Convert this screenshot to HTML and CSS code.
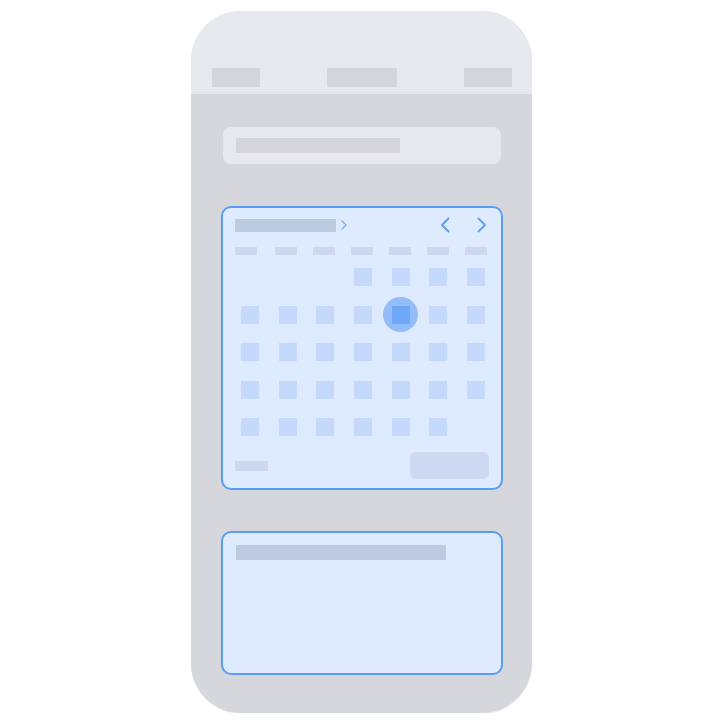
FILE: index.html
```html
<!DOCTYPE html>
<html>
<head>
<meta charset="utf-8">
<link rel="stylesheet" href="styles.css">
</head>
<body>
<div class="phone">
  <div class="header">
    <div class="ph ph-side"></div>
    <div class="ph ph-mid"></div>
    <div class="ph ph-side"></div>
  </div>
  <div class="content">
    <div class="search"><div class="search-bar"></div></div>
    <div class="card cal">
      <div class="cal-head">
        <div class="title-bar"></div>
        <svg class="mini-chev" width="6" height="10" viewBox="0 0 6 10"><path d="M1 1 L5 5 L1 9" fill="none" stroke="#7aaef6" stroke-width="1.2" stroke-linecap="round" stroke-linejoin="round"/></svg>
        <div class="spacer"></div>
        <svg class="nav" width="10" height="16" viewBox="0 0 10 16"><path d="M8.5 1.5 L2 8 L8.5 14.5" fill="none" stroke="#5b9cf5" stroke-width="1.8" stroke-linecap="round" stroke-linejoin="round"/></svg>
        <svg class="nav" width="10" height="16" viewBox="0 0 10 16"><path d="M1.5 1.5 L8 8 L1.5 14.5" fill="none" stroke="#5b9cf5" stroke-width="1.8" stroke-linecap="round" stroke-linejoin="round"/></svg>
      </div>
      <div class="weekdays">
        <div class="wd"></div><div class="wd"></div><div class="wd"></div><div class="wd"></div><div class="wd"></div><div class="wd"></div><div class="wd"></div>
      </div>
      <div class="days">
        <div class="empty"></div><div class="empty"></div><div class="empty"></div>
        <div class="day"></div><div class="day"></div><div class="day"></div><div class="day"></div>
        <div class="day"></div><div class="day"></div><div class="day"></div><div class="day"></div><div class="day selected"></div><div class="day"></div><div class="day"></div>
        <div class="day"></div><div class="day"></div><div class="day"></div><div class="day"></div><div class="day"></div><div class="day"></div><div class="day"></div>
        <div class="day"></div><div class="day"></div><div class="day"></div><div class="day"></div><div class="day"></div><div class="day"></div><div class="day"></div>
        <div class="day"></div><div class="day"></div><div class="day"></div><div class="day"></div><div class="day"></div><div class="day"></div>
      </div>
      <div class="cal-foot">
        <div class="foot-bar"></div>
        <div class="foot-btn"></div>
      </div>
    </div>
    <div class="card detail">
      <div class="detail-bar"></div>
    </div>
  </div>
</div>
</body>
</html>
```
FILE: styles.css
```css
html, body {
  margin: 0;
  padding: 0;
  background: #ffffff;
  font-family: "Liberation Sans", Arial, sans-serif;
}

.phone {
  width: 341px;
  height: 702px;
  margin: 11px 0 0 191px;
  border-radius: 50px;
  overflow: hidden;
  background: #d6d7dc;
  display: flex;
  flex-direction: column;
  box-shadow: 0 1px 0 #eceef2;
}

.header {
  height: 83px;
  flex: none;
  box-sizing: border-box;
  background: #e8e9ee;
  display: flex;
  justify-content: space-between;
  align-items: flex-start;
  padding: 57px 20px 0 21px;
}

.ph {
  height: 19px;
  background: #d4d5da;
}
.ph-side { width: 48px; }
.ph-mid { width: 70px; }

.content {
  display: flex;
  flex-direction: column;
  padding: 33px 0 0 30px;
}

.search {
  width: 278px;
  height: 37px;
  margin-left: 2px;
  box-sizing: border-box;
  background: #e8e9ee;
  border-radius: 8px;
  padding: 11px 0 0 13px;
}
.search-bar {
  width: 164px;
  height: 15px;
  background: #d5d4d9;
}

.card {
  width: 282px;
  box-sizing: border-box;
  border: 2px solid #5b9cf5;
  border-radius: 10px;
  background: #deeafd;
}

.cal {
  margin-top: 42px;
  height: 284px;
  padding: 9px 14px 0 12px;
  display: flex;
  flex-direction: column;
}

.cal-head {
  height: 16px;
  display: flex;
  align-items: center;
}
.title-bar {
  width: 101px;
  height: 13px;
  background: #bdcbe1;
}
.mini-chev {
  margin-left: 5px;
}
.spacer { flex: 1; }
.nav + .nav { margin-left: 27px; }

.weekdays {
  margin-top: 14px;
  height: 8px;
  display: flex;
  gap: 16px;
}
.wd {
  width: 22px;
  height: 8px;
  background: #cbd8f0;
}
.wd:first-child { margin-right: 2px; }

.days {
  margin: 13px 0 0 6px;
  width: 244px;
  display: grid;
  grid-template-columns: repeat(7, 18px);
  grid-auto-rows: 18px;
  justify-content: space-between;
  row-gap: 19.5px;
}
.day {
  background: #c4d9fb;
  position: relative;
}
.day.selected {
  background: transparent;
}
.day.selected::before {
  content: "";
  position: absolute;
  left: -8.5px;
  top: -8.5px;
  width: 35px;
  height: 35px;
  border-radius: 50%;
  background: #92bdf9;
}
.day.selected::after {
  content: "";
  position: absolute;
  left: 0;
  top: 0;
  width: 18px;
  height: 18px;
  background: #6fa7f7;
}

.cal-foot {
  margin-top: 16px;
  height: 27px;
  display: flex;
  justify-content: space-between;
  align-items: center;
  margin-right: -2px;
}
.foot-bar {
  width: 33px;
  height: 10px;
  background: #cbd8f0;
}
.foot-btn {
  width: 79px;
  height: 27px;
  border-radius: 6px;
  background: #cdd9f2;
}

.detail {
  margin-top: 41px;
  height: 144px;
  padding: 12px 0 0 13px;
}
.detail-bar {
  width: 210px;
  height: 15px;
  background: #bdcbe1;
}
```
